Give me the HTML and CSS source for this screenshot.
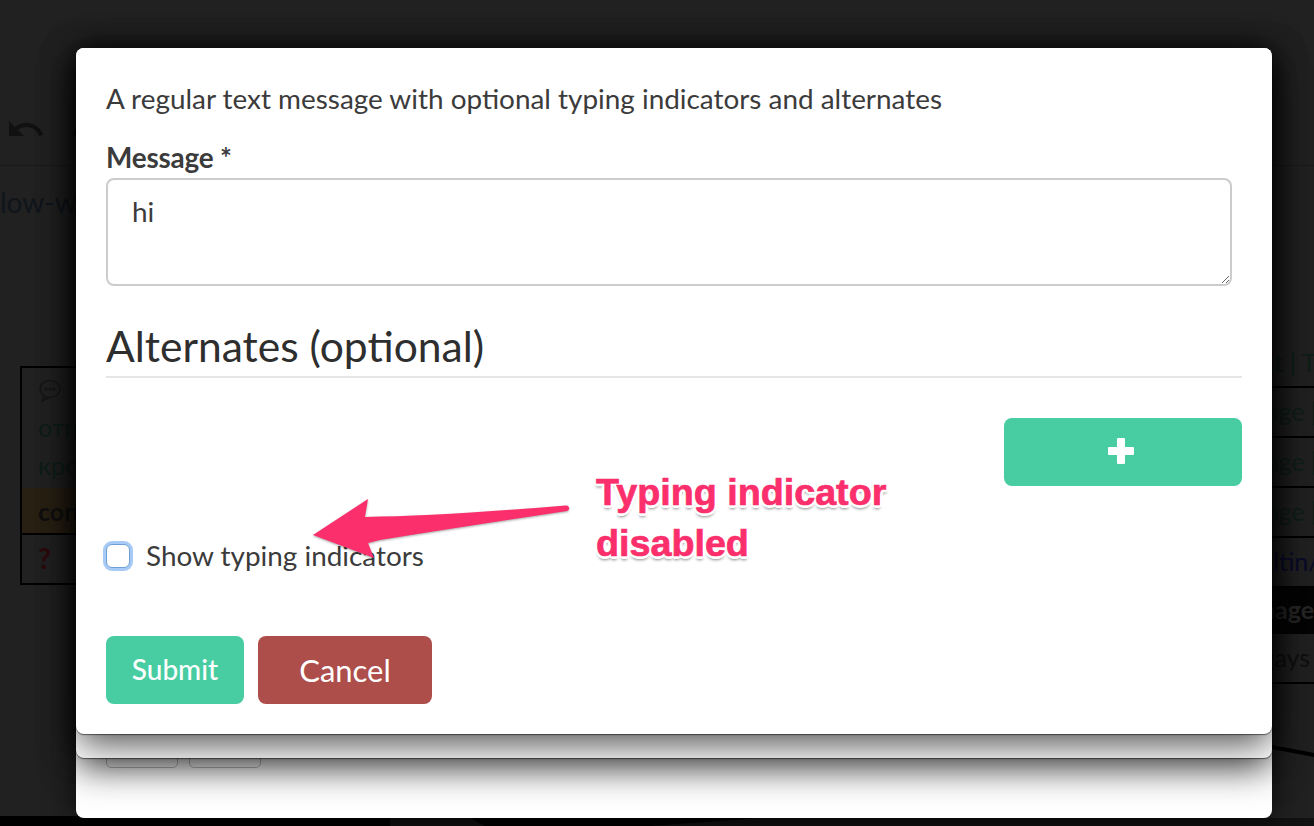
FILE: index.html
```html
<!DOCTYPE html>
<html lang="en">
<head>
<meta charset="utf-8">
<title>Message form</title>
<link rel="stylesheet" href="styles.css">
</head>
<body>
<div class="backdrop">
  <div class="toolbar">
    <svg class="undo" viewBox="2 7 21 9.500" aria-hidden="true"><path d="M12.500 8c-2.650 0-5.050.99-6.900 2.600L2 7v9h9l-3.620-3.620c1.390-1.160 3.160-1.880 5.120-1.880 3.540 0 6.550 2.310 7.600 5.500l2.370-.78C21.080 11.030 17.150 8 12.500 8z"/></svg>
    <svg class="undo redo" viewBox="2 7 21 9.500" aria-hidden="true"><path d="M12.500 8c-2.650 0-5.050.99-6.900 2.600L2 7v9h9l-3.620-3.620c1.390-1.160 3.160-1.880 5.120-1.880 3.540 0 6.550 2.310 7.600 5.500l2.370-.78C21.080 11.030 17.150 8 12.500 8z"/></svg>
  </div>
  <div class="crumb">low-w</div>
  <div class="tables">
    <div class="tbl-left">
      <div class="row row-main">
        <svg class="bubble" viewBox="0 0 24 24" aria-hidden="true"><ellipse cx="12" cy="10" rx="10" ry="8.500"/><path d="M6 17 L4 22 L11 18.500"/><circle cx="8" cy="10" r=".8"/><circle cx="12" cy="10" r=".8"/><circle cx="16" cy="10" r=".8"/></svg>
        <div class="green">отп</div>
        <div class="green">кро</div>
      </div>
      <div class="row row-orange"><b>con</b></div>
      <div class="row row-q"><b class="red">?</b></div>
    </div>
    <div class="tbl-right">
      <div class="rrow rrow-head green">xt | Te</div>
      <div class="rrow green">age |</div>
      <div class="rrow green">age |</div>
      <div class="rrow green">age |</div>
      <div class="rrow rrow-link blue">ltin/</div>
      <div class="rrow rrow-dark"><b>nage</b></div>
      <div class="rrow rrow-plain">ways</div>
    </div>
  </div>
  <svg class="wires" viewBox="0 0 1314 826" aria-hidden="true">
    <rect x="0" y="816" width="390" height="10" fill="#000"/>
    <rect x="390" y="818" width="924" height="8" fill="#111"/>
    <path d="M470 818H760L650 826H485Z" fill="#000"/>
    <path d="M1272 745L1314 753V757L1272 749Z" fill="#000"/>
  </svg>
</div>

<div class="sheet sheet-back"><div class="ghost-buttons"><span class="ghost"></span><span class="ghost"></span></div></div>
<div class="sheet sheet-mid"></div>

<form class="sheet sheet-front">
  <p class="intro">A regular text message with optional typing indicators and alternates</p>
  <label class="field-label" for="msg">Message *</label>
  <textarea class="msg" id="msg">hi</textarea>
  <h2 class="section">Alternates (optional)</h2>
  <div class="add-row"><button type="button" class="btn-add"><svg viewBox="0 0 26 26" aria-hidden="true"><path d="M9 1a1 1 0 0 1 1-1h6a1 1 0 0 1 1 1v8h8a1 1 0 0 1 1 1v6a1 1 0 0 1-1 1h-8v8a1 1 0 0 1-1 1h-6a1 1 0 0 1-1-1v-8H1a1 1 0 0 1-1-1v-6a1 1 0 0 1 1-1h8z"/></svg></button></div>
  <label class="check-row"><span class="check"></span>Show typing indicators</label>
  <div class="actions">
    <button type="button" class="btn btn-submit">Submit</button>
    <button type="button" class="btn btn-cancel">Cancel</button>
  </div>
</form>

<svg class="arrow" viewBox="0 0 270 70" aria-hidden="true"><path d="M2 36 L57 0 L54 18 Q130 17 255 6.500 C258.500 6.300 259.500 11 256 12 Q150 28 69 41 L57 44 L63 59 Z"/></svg>
<div class="note">Typing indicator<br>disabled</div>
</body>
</html>
```

FILE: styles.css
```css
* { box-sizing: border-box; }
html, body { margin: 0; height: 100%; }
body {
  width: 1314px;
  height: 826px;
  overflow: hidden;
  position: relative;
  background: #212121;
  font-family: Lato, "Noto Sans", sans-serif;
  color: #3b3b3b;
}

/* dimmed page behind the dialogs */
.backdrop { color: #101010; font-size: 25px; line-height: 30px; }
.toolbar {
  display: flex;
  gap: 27px;
  height: 166px;
  padding: 121px 0 0 9px;
  border-bottom: 1px solid #1a1a1a;
}
.undo { display: block; width: 35px; height: 16px; fill: #111; }
.redo { transform: scaleX(-1); }
.crumb { margin-top: 21px; color: #10151c; font-size: 28px; }
.tables {
  display: flex;
  justify-content: space-between;
  align-items: flex-start;
  margin-top: 149px;
  padding-left: 20px;
}
.tbl-left { width: 300px; border: 2px solid #000; }
.row { padding: 0 16px; }
.row-main { height: 120px; padding-top: 11px; line-height: 38px; }
.row-orange { height: 47px; line-height: 46px; background: #282013; border-bottom: 2px solid #000; }
.row-q { height: 48px; line-height: 46px; }
.bubble { display: block; width: 24px; height: 24px; margin-bottom: 5px; fill: none; stroke: #161616; stroke-width: 1.400; }
.green { color: #0f1e18; }
.red { color: #2c0a0c; font-size: 28px; }
.blue { color: #0b0b2a; }
.tbl-right { width: 300px; margin-top: -14px; display: flex; flex-direction: column; }
.rrow {
  height: 50px;
  line-height: 46px;
  padding-left: 252px;
  border-bottom: 2px solid #000;
  white-space: nowrap;
  overflow: hidden;
}
.rrow-head { height: 36px; line-height: 20px; padding-left: 248px; }
.rrow-link { padding-left: 259px; }
.rrow-dark { height: 46px; line-height: 42px; padding-left: 247px; background: #050505; color: #262626; border-bottom: 0; }
.rrow-plain { padding-left: 241px; }
.wires { position: absolute; left: 0; top: 0; width: 1314px; height: 826px; }

/* stacked dialogs */
.sheet {
  position: absolute;
  left: 76px;
  width: 1196px;
  background: #fff;
  border-radius: 8px;
}
.sheet-back { top: 48px; height: 770px; box-shadow: 0 0 30px rgba(0,0,0,.75); }
.sheet-mid { top: 48px; height: 710px; box-shadow: 0 1px 1px rgba(0,0,0,.5), 0 12px 36px -2px rgba(0,0,0,.7); }
.ghost-buttons { position: absolute; left: 30px; top: 690px; display: flex; gap: 11px; }
.ghost { width: 72px; height: 30px; border: 1px solid #bdbdbd; border-radius: 5px; }

.sheet-front {
  top: 48px;
  height: 686px;
  padding: 32px 30px 0;
  box-shadow: 0 1px 1px rgba(0,0,0,.5), 0 12px 36px -2px rgba(0,0,0,.7);
  font-size: 27.900px;
}
.intro { margin: 0; line-height: 36px; }
.field-label { display: block; margin-top: 23px; font-weight: 700; line-height: 36px; letter-spacing: -.2px; }
.msg {
  display: block;
  width: 1126px;
  height: 108px;
  margin-top: 3px;
  padding: 13px 24px;
  border: 2px solid #ccc;
  border-radius: 8px;
  font: inherit;
  line-height: 36px;
  color: #3b3b3b;
  outline: 0;
}
.section {
  margin: 32px 0 0;
  height: 60px;
  font-size: 42.600px;
  font-weight: 400;
  line-height: 56px;
  color: #2e2e2e;
  border-bottom: 2px solid #e6e6e6;
}
.add-row { display: flex; justify-content: flex-end; margin-top: 40px; }
.btn-add {
  display: flex;
  align-items: center;
  justify-content: center;
  width: 238px;
  height: 68px;
  padding: 0 4px 2px 0;
  border: 0;
  border-radius: 8px;
  background: #48cda2;
}
.btn-add svg { display: block; width: 26px; height: 26px; fill: #fff; }
.check-row { display: flex; align-items: center; margin-top: 51px; height: 36px; line-height: 36px; }
.check {
  flex: none;
  width: 24px;
  height: 24px;
  margin: 2px 16px 0 0;
  border: 1px solid #6f9fd8;
  border-radius: 6px;
  background: #fff;
  box-shadow: 0 0 0 3px #a8cbf5;
}
.actions { display: flex; align-items: flex-start; gap: 14px; margin-top: 63px; }
.btn {
  height: 68px;
  border: 0;
  border-radius: 8px;
  color: #fff;
  font: inherit;
  padding: 0;
}
.btn-submit { width: 138px; background: #48cda2; font-size: 28px; font-weight: 500; padding-bottom: 2px; }
.btn-cancel { width: 174px; background: #ad4e4a; font-size: 31px; }

/* annotation over the form */
.arrow {
  position: absolute;
  left: 311px;
  top: 499px;
  width: 270px;
  height: 70px;
  overflow: visible;
  fill: #fb2f6c;
  filter: drop-shadow(0 1px 1px rgba(0,0,0,.35));
}
.note {
  position: absolute;
  left: 596px;
  top: 467px;
  font-family: "Liberation Sans", Arial, sans-serif;
  font-size: 37.700px;
  font-weight: 700;
  line-height: 51px;
  color: #fb2f6c;
  -webkit-text-stroke: .7px #fb2f6c;
  text-shadow:
    3px 0 0 #fff, -3px 0 0 #fff, 0 3px 0 #fff, 0 -3px 0 #fff,
    2px 2px 0 #fff, -2px 2px 0 #fff, 2px -2px 0 #fff, -2px -2px 0 #fff,
    0 4px 3px rgba(0,0,0,.45);
}
```
